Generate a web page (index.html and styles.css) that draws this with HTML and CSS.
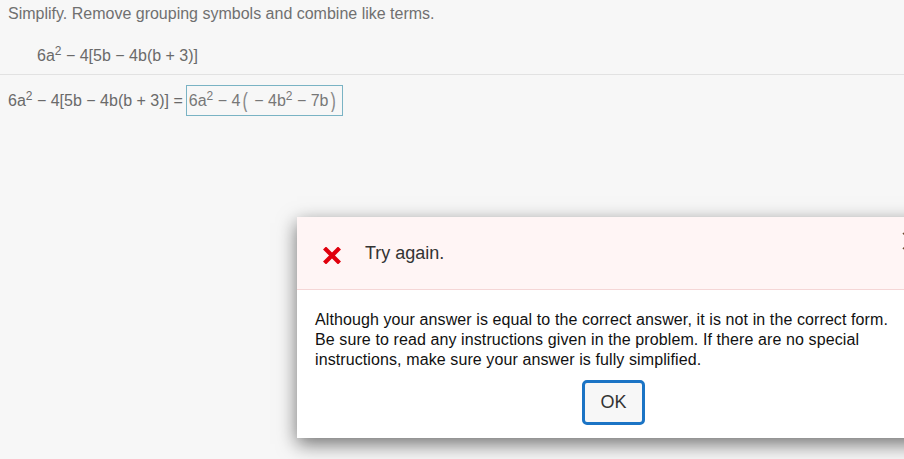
FILE: index.html
```html
<!DOCTYPE html>
<html>
<head>
<meta charset="utf-8">
<link rel="stylesheet" href="styles.css">
</head>
<body>
<div class="page">
  <p class="instructions">Simplify. Remove grouping symbols and combine like terms.</p>
  <p class="problem">6a<sup>2</sup> − 4[5b − 4b(b + 3)]</p>
  <div class="rule"></div>
  <div class="answer-line">
    <span class="lhs">6a<sup>2</sup> − 4[5b − 4b(b + 3)] =</span>
    <span class="answer-box">6a<sup>2</sup> − 4<span class="paren">(</span> − 4b<sup>2</sup> − 7b<span class="paren">)</span></span>
  </div>
</div>

<div class="dialog">
  <div class="dialog-head">
    <svg class="x-icon" width="18" height="17" viewBox="0 0 18 17" aria-hidden="true">
      <path d="M3 2.5 L15 14.5 M15 2.5 L3 14.5" stroke="#e0000d" stroke-width="4.2" stroke-linecap="square"/>
    </svg>
    <span class="head-title">Try again.</span>
    <svg class="close" width="18" height="18" viewBox="0 0 18 18" aria-hidden="true">
      <path d="M1 1 L17 17 M17 1 L1 17" stroke="#6b4a2e" stroke-width="1.6"/>
    </svg>
  </div>
  <div class="dialog-body">
    <p class="msg">Although your answer is equal to the correct answer, it is not in the correct form. Be sure to read any instructions given in the problem. If there are no special instructions, make sure your answer is fully simplified.</p>
    <div class="actions"><button class="ok">OK</button></div>
  </div>
</div>
</body>
</html>
```
FILE: styles.css
```css
html, body {
  margin: 0;
  padding: 0;
  background: #f7f7f7;
  font-family: "Liberation Sans", Arial, sans-serif;
  overflow: hidden;
  height: 459px;
}

.page {
  padding-top: 4px;
}

.instructions {
  margin: 0;
  padding-left: 8px;
  font-size: 16px;
  line-height: 20px;
  color: #707070;
}

.problem {
  margin: 22px 0 0 0;
  padding-left: 37px;
  font-size: 16px;
  line-height: 20px;
  color: #6a6a6a;
}

sup {
  font-size: 12px;
  line-height: 0;
  vertical-align: 6px;
}

.rule {
  margin-top: 8px;
  border-top: 1px solid #e2e2e2;
}

.answer-line {
  display: flex;
  align-items: center;
  gap: 3px;
  margin-top: 10px;
  padding-left: 8px;
  font-size: 16px;
  color: #6a6a6a;
}

.answer-box {
  display: inline-block;
  height: 28px;
  line-height: 28px;
  padding: 1px 4px 0 2px;
  border: 1px solid #7ab3c4;
  color: #777;
  white-space: pre;
}

.paren {
  display: inline-block;
  transform: scaleY(1.35);
  font-weight: 300;
  color: #888;
  margin: 0 2px;
}

.dialog {
  position: absolute;
  left: 297px;
  top: 217px;
  width: 640px;
  background: #fff;
  box-shadow: 0 6px 18px rgba(0, 0, 0, 0.55);
}

.dialog-head {
  position: relative;
  display: flex;
  align-items: center;
  height: 72px;
  background: #fff5f5;
  border-bottom: 1px solid #f5d6d6;
  padding-left: 26px;
}

.x-icon {
  display: block;
  margin-top: 4px;
}

.head-title {
  margin-left: 24px;
  font-size: 18px;
  color: #333;
}

.close {
  position: absolute;
  left: 605px;
  top: 15px;
}

.dialog-body {
  padding: 20px 18px 13px 18px;
}

.msg {
  margin: 0;
  width: 585px;
  font-size: 16px;
  letter-spacing: 0.1px;
  line-height: 20px;
  color: #111;
}

.actions {
  display: flex;
  padding-left: 267px;
  margin-top: 10px;
}

.ok {
  width: 63px;
  height: 45px;
  border: 3px solid #1b74c5;
  border-radius: 5px;
  background: #f7f7f7;
  font-family: "Liberation Sans", Arial, sans-serif;
  font-size: 18px;
  color: #333;
  padding: 0;
}
```
